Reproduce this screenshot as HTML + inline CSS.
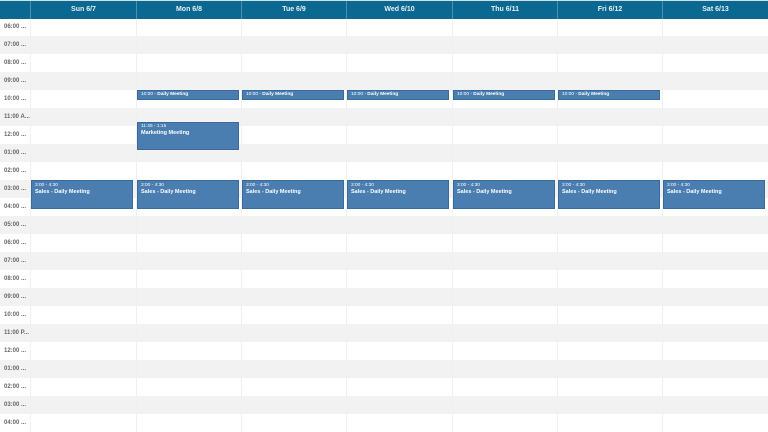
<!DOCTYPE html>
<html><head><meta charset="utf-8"><style>
*{margin:0;padding:0;box-sizing:border-box}
body{width:768px;height:432px;overflow:hidden;background:#fff;font-family:"Liberation Sans",sans-serif;position:relative}
.hdr{position:absolute;left:0;top:0;width:768px;height:19px;background:#0b6890;border-top:1px solid #cfe0ea}
.hdr div{position:absolute;top:0;height:18px;line-height:18px;text-align:center;color:#e8f1f6;font-size:7px;font-weight:bold;border-left:1px solid #4d8fae}
.row{position:absolute;left:0;width:768px;height:18px}
.row.g{background:#f2f2f2}
.row span{position:absolute;left:4px;top:0;line-height:18px;font-size:6px;font-weight:bold;color:#666}
.vl{position:absolute;top:19px;bottom:0;width:1px;background:#f0f0f0}
.ev{position:absolute;background:#4a7db0;border:1px solid #3a6a9a;color:#fff;font-size:4.8px;padding:1px 3px;overflow:hidden;white-space:nowrap}
.ev b{display:block;font-size:5.5px;margin-top:1px}
</style></head><body>
<div class="hdr">
<div style="left:0;width:31px;border-left:none"></div>
<div style="left:30px;width:106px">Sun 6/7</div>
<div style="left:136px;width:105px">Mon 6/8</div>
<div style="left:241px;width:105px">Tue 6/9</div>
<div style="left:346px;width:106px">Wed 6/10</div>
<div style="left:452px;width:105px">Thu 6/11</div>
<div style="left:557px;width:105px">Fri 6/12</div>
<div style="left:662px;width:106px">Sat 6/13</div>
</div>
<div id="rows"></div>
<script>
var a=["06:00 ...","07:00 ...","08:00 ...","09:00 ...","10:00 ...","11:00 A...","12:00 ...","01:00 ...","02:00 ...","03:00 ...","04:00 ..."];
var b=["05:00 ...","06:00 ...","07:00 ...","08:00 ...","09:00 ...","10:00 ...","11:00 P...","12:00 ...","01:00 ...","02:00 ...","03:00 ...","04:00 ..."];
var h="";
a.forEach(function(t,i){h+='<div class="row'+(i%2?' g':'')+'" style="top:'+(18+i*18)+'px"><span>'+t+'</span></div>';});
b.forEach(function(t,i){h+='<div class="row'+(i%2?'':' g')+'" style="top:'+(216+i*18)+'px"><span>'+t+'</span></div>';});
[30,136,241,346,452,557,662].forEach(function(x){h+='<div class="vl" style="left:'+x+'px"></div>';});
var cols=[31,137,242,347,453,558,663];
for(var i=1;i<6;i++)h+='<div class="ev" style="left:'+cols[i]+'px;top:90px;width:102px;height:10px;padding-top:1px">10:00 - <span style="font-weight:bold">Daily Meeting</span></div>';
h+='<div class="ev" style="left:137px;top:122px;width:102px;height:28px">11:45 - 1:15<b>Marketing Meeting</b></div>';
for(var i=0;i<7;i++)h+='<div class="ev" style="left:'+cols[i]+'px;top:180px;width:102px;height:29px;padding-top:2px">3:00 - 4:30<b>Sales - Daily Meeting</b></div>';
document.getElementById("rows").innerHTML=h;
</script>
</body></html>
